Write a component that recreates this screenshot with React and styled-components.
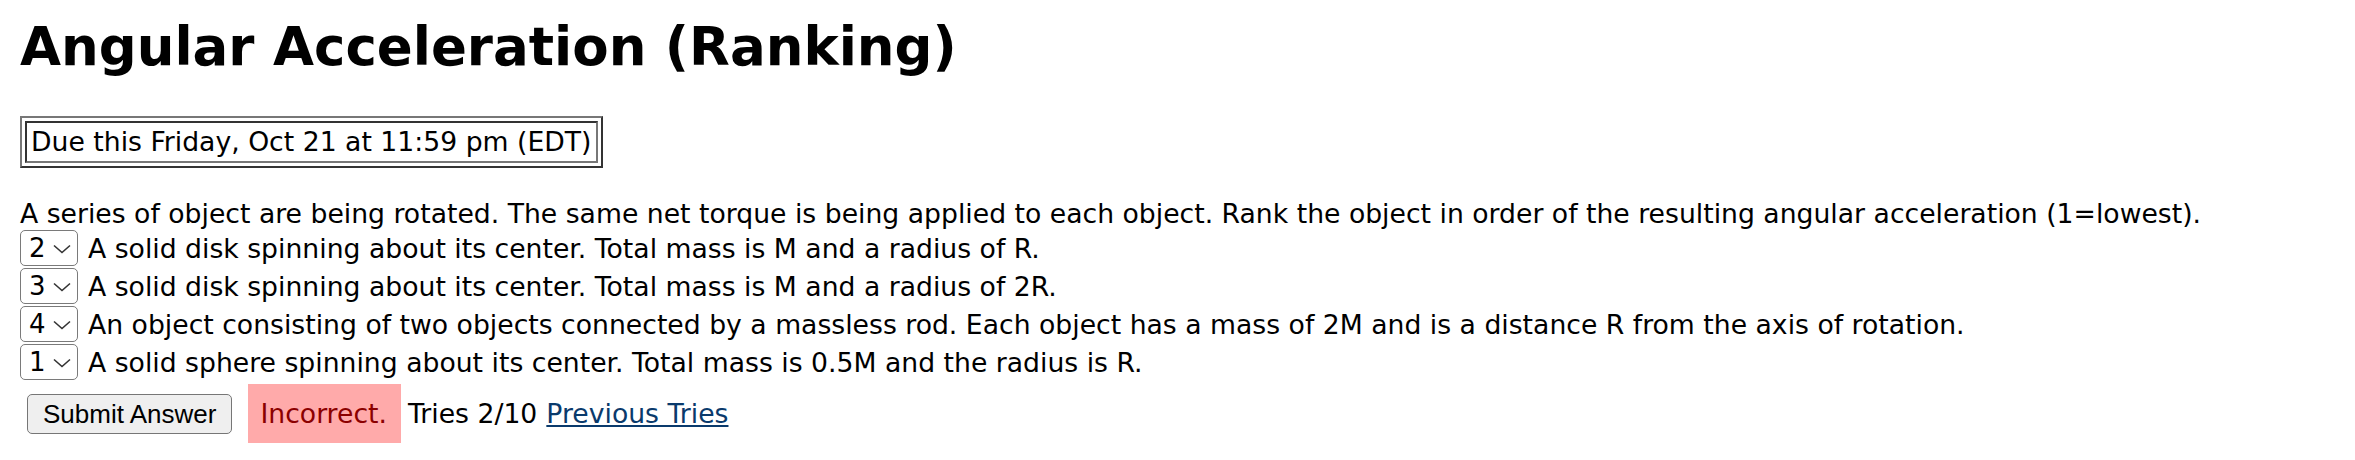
import styled, { createGlobalStyle } from "styled-components";

const GlobalStyle = createGlobalStyle`
  body {
    margin: 0;
    background: #ffffff;
    color: #000000;
    font-family: "DejaVu Sans", Verdana, sans-serif;
    font-size: 26.67px;
  }
`;

const items = [
  { rank: "2", text: "A solid disk spinning about its center. Total mass is M and a radius of R." },
  { rank: "3", text: "A solid disk spinning about its center. Total mass is M and a radius of 2R." },
  {
    rank: "4",
    text: "An object consisting of two objects connected by a massless rod. Each object has a mass of 2M and is a distance R from the axis of rotation.",
  },
  { rank: "1", text: "A solid sphere spinning about its center. Total mass is 0.5M and the radius is R." },
];

const App = () => {
  return (
    <Page>
      <GlobalStyle />
      <Title>Angular Acceleration (Ranking)</Title>
      <DueBox>
        <DueCell>Due this Friday, Oct 21 at 11:59 pm (EDT)</DueCell>
      </DueBox>
      <Question>
        A series of object are being rotated. The same net torque is being applied to each
        object. Rank the object in order of the resulting angular acceleration (1=lowest).
      </Question>
      {items.map((item, i) => (
        <RankRow key={i}>
          <PickerWrap>
            <Picker defaultValue={item.rank}>
              {["1", "2", "3", "4"].map((n) => (
                <option key={n} value={n}>
                  {n}
                </option>
              ))}
            </Picker>
            <Chevron width="18" height="10" viewBox="0 0 18 10">
              <polyline points="1,1.5 9,8.5 17,1.5" fill="none" stroke="#333" strokeWidth="1.6" />
            </Chevron>
          </PickerWrap>
          <span>{item.text}</span>
        </RankRow>
      ))}
      <Actions>
        <SubmitButton type="button">Submit Answer</SubmitButton>
        <Verdict>Incorrect.</Verdict>
        <Tries>Tries 2/10</Tries>
        <TriesLink href="#">Previous Tries</TriesLink>
      </Actions>
    </Page>
  );
};

const Page = styled.div`
  padding: 16px 20px 0;
`;

const Title = styled.h1`
  margin: 0 0 38px;
  font-size: 53px;
  font-weight: bold;
  line-height: 62px;
`;

const DueBox = styled.div`
  display: inline-block;
  padding: 3px;
  border: 2px solid;
  border-color: #777777 #333333 #333333 #777777;
`;

const DueCell = styled.div`
  padding: 3px 5px 4px 4px;
  line-height: 31px;
  border: 2px solid;
  border-color: #333333 #777777 #777777 #333333;
`;

const Question = styled.div`
  margin-top: 30px;
  line-height: 31px;
`;

const RankRow = styled.div`
  display: flex;
  align-items: center;
  height: 38px;
  line-height: 31px;
`;

const PickerWrap = styled.span`
  position: relative;
  display: inline-flex;
  margin-right: 10px;
`;

const Picker = styled.select`
  appearance: none;
  -webkit-appearance: none;
  width: 58px;
  height: 36px;
  padding: 0 0 0 8px;
  border: 1.7px solid #7a7a7a;
  border-radius: 5px;
  background: #ffffff;
  color: #000000;
  font-family: "DejaVu Sans", Verdana, sans-serif;
  font-size: 26px;
`;

const Chevron = styled.svg`
  position: absolute;
  right: 7px;
  top: 14px;
  pointer-events: none;
`;

const Actions = styled.div`
  display: flex;
  align-items: baseline;
  margin-top: 3px;
  line-height: 31px;
`;

const SubmitButton = styled.button`
  margin-left: 7px;
  padding: 4px 15px 4px;
  border: 1.7px solid #767676;
  border-radius: 5px;
  background: #efefef;
  color: #000000;
  font-family: "Liberation Sans", Arial, sans-serif;
  font-size: 26px;
  line-height: 30px;
`;

const Verdict = styled.span`
  margin-left: 16px;
  padding: 14px 14px 14px 12px;
  background: #ffaaaa;
  color: #8b0000;
`;

const Tries = styled.span`
  margin-left: 7px;
`;

const TriesLink = styled.a`
  margin-left: 9px;
  color: #0a3a6c;
  text-decoration: underline;
`;

export default App;
